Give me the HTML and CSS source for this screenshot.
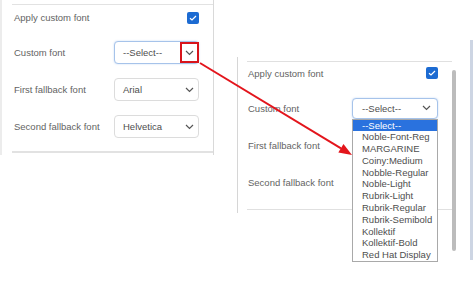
FILE: index.html
```html
<!DOCTYPE html>
<html lang="en">
<head>
	<meta charset="UTF-8">
	<title>Custom font</title>
	<link rel="stylesheet" href="styles.css">
</head>
<body>
<div class="stage">
	<!-- first shot: closed select -->
	<div class="shotLeft">
		<div class="card">
			<div class="row first">
				<span class="label">Apply custom font</span>
				<span class="check"><svg width="8" height="6" viewBox="0 0 8 6"><path d="M1 3.2 L3 5 L7 1" fill="none" stroke="#fff" stroke-width="1.2"/></svg></span>
			</div>
			<div class="row second">
				<span class="label">Custom font</span>
				<div class="sel focus">
					<span>--Select--</span>
					<svg class="chev" width="9" height="6" viewBox="0 0 9 6"><path d="M1 1 L4.5 4.5 L8 1" fill="none" stroke="#555" stroke-width="1.2"/></svg>
					<i class="mark"></i>
				</div>
			</div>
			<div class="row">
				<span class="label">First fallback font</span>
				<div class="sel">
					<span>Arial</span>
					<svg class="chev" width="9" height="6" viewBox="0 0 9 6"><path d="M1 1 L4.5 4.5 L8 1" fill="none" stroke="#555" stroke-width="1.2"/></svg>
				</div>
			</div>
			<div class="row">
				<span class="label">Second fallback font</span>
				<div class="sel">
					<span>Helvetica</span>
					<svg class="chev" width="9" height="6" viewBox="0 0 9 6"><path d="M1 1 L4.5 4.5 L8 1" fill="none" stroke="#555" stroke-width="1.2"/></svg>
				</div>
			</div>
		</div>
	</div>
	<!-- second shot: open select -->
	<div class="shotRight">
		<div class="pane">
			<div class="card2">
				<div class="row2">
					<span class="label">Apply custom font</span>
					<span class="check"><svg width="8" height="6" viewBox="0 0 8 6"><path d="M1 3.2 L3 5 L7 1" fill="none" stroke="#fff" stroke-width="1.2"/></svg></span>
				</div>
				<div class="row2 r2">
					<span class="label">Custom font</span>
					<div class="sel sel2 focus">
						<span>--Select--</span>
						<svg class="chev" width="9" height="6" viewBox="0 0 9 6"><path d="M1 1 L4.5 4.5 L8 1" fill="none" stroke="#555" stroke-width="1.2"/></svg>
						<ul class="list">
							<li class="on">--Select--</li>
							<li>Noble-Font-Reg</li>
							<li>MARGARINE</li>
							<li>Coiny:Medium</li>
							<li>Nobble-Regular</li>
							<li>Noble-Light</li>
							<li>Rubrik-Light</li>
							<li>Rubrik-Regular</li>
							<li>Rubrik-Semibold</li>
							<li>Kollektif</li>
							<li>Kollektif-Bold</li>
							<li>Red Hat Display</li>
						</ul>
					</div>
				</div>
				<!-- these two selects sit under the open list -->
				<div class="row2 r3">
					<span class="label">First fallback font</span>
					<div class="sel sel2"></div>
				</div>
				<div class="row2 r3">
					<span class="label">Second fallback font</span>
					<div class="sel sel2"></div>
				</div>
			</div>
		</div>
		<div class="scroll"></div>
		<div class="edge"></div>
	</div>
	<svg class="arrow" width="474" height="282" viewBox="0 0 474 282">
		<line x1="200" y1="63" x2="341" y2="148.3" stroke="#e3151c" stroke-width="2"/>
		<polygon points="352,155 343.5,144 338.3,152.6" fill="#e3151c"/>
	</svg>
</div>
</body>
</html>
```
FILE: styles.css
```css
*{ padding: 0; margin: 0; box-sizing: border-box; }
li{ list-style-type: none; }
body{ background: #fff; font-family: "Liberation Sans", Arial, sans-serif; font-size: 9.5px; color: #636363; }
.stage{ width: 474px; height: 282px; position: relative; display: flex; align-items: flex-start; overflow: hidden; }

.shotLeft{ width: 214px; height: 155px; padding-left: 10px; border-left: 2px solid #ececec; border-right: 1px solid #d9d9d9; }
.card{ margin-top: 4px; border-top: 1px solid #e2e2e2; border-bottom: 2px solid #e2e2e2; padding: 1px 14px 13px 2px; }
.row{ display: flex; align-items: center; justify-content: space-between; height: 23px; margin-top: 14px; }
.row.first{ margin-top: 0; }
.row.second{ margin-top: 12px; }

.check{ width: 12px; height: 12px; background: #1c6bd2; border-radius: 2px; display: flex; align-items: center; justify-content: center; }

.sel{ width: 85px; height: 23px; border: 1px solid #dcdcdc; border-radius: 4px; background: #fff; display: flex; align-items: center; justify-content: space-between; padding: 0 4px 0 8px; color: #4e4e4e; position: relative; }
.sel.focus{ border-color: #a6c3ea; box-shadow: 0 0 2px rgba(80,140,220,0.35); }
.chev{ display: block; }
.mark{ position: absolute; right: -1px; top: 0; width: 19px; height: 21px; border: 2px solid #d8141b; }

.shotRight{ display: flex; align-items: flex-start; margin-top: 57px; margin-left: 23px; }
.pane{ height: 156px; border-left: 1px solid #d6d6d6; padding-left: 9px; }
.card2{ width: 205px; margin-top: 4px; border-top: 1px solid #e0e0e0; border-bottom: 1px solid #e0e0e0; padding: 0 14px 16px 1px; }
.row2{ display: flex; align-items: center; justify-content: space-between; height: 22px; }
.row2.r2{ margin-top: 13px; }
.row2.r3{ margin-top: 15px; }
.sel2{ width: 86px; height: 21px; padding: 0 6px 0 9px; }

.list{ position: absolute; left: -1px; top: 20px; width: 86px; background: #fff; border: 1px solid #a9a9a9; z-index: 2; }
.list li{ height: 11.8px; line-height: 11.8px; padding-left: 9px; color: #4e4e4e; white-space: nowrap; }
.list li.on{ background: #2a72de; color: #fff; }

.scroll{ width: 4px; height: 181px; margin-top: 13px; background: #bcbcbc; border-radius: 2px; }
.edge{ width: 3px; height: 220px; margin-top: -17px; margin-left: 14px; background: #cdd5e3; }

.arrow{ position: absolute; left: 0; top: 0; z-index: 3; }
```
